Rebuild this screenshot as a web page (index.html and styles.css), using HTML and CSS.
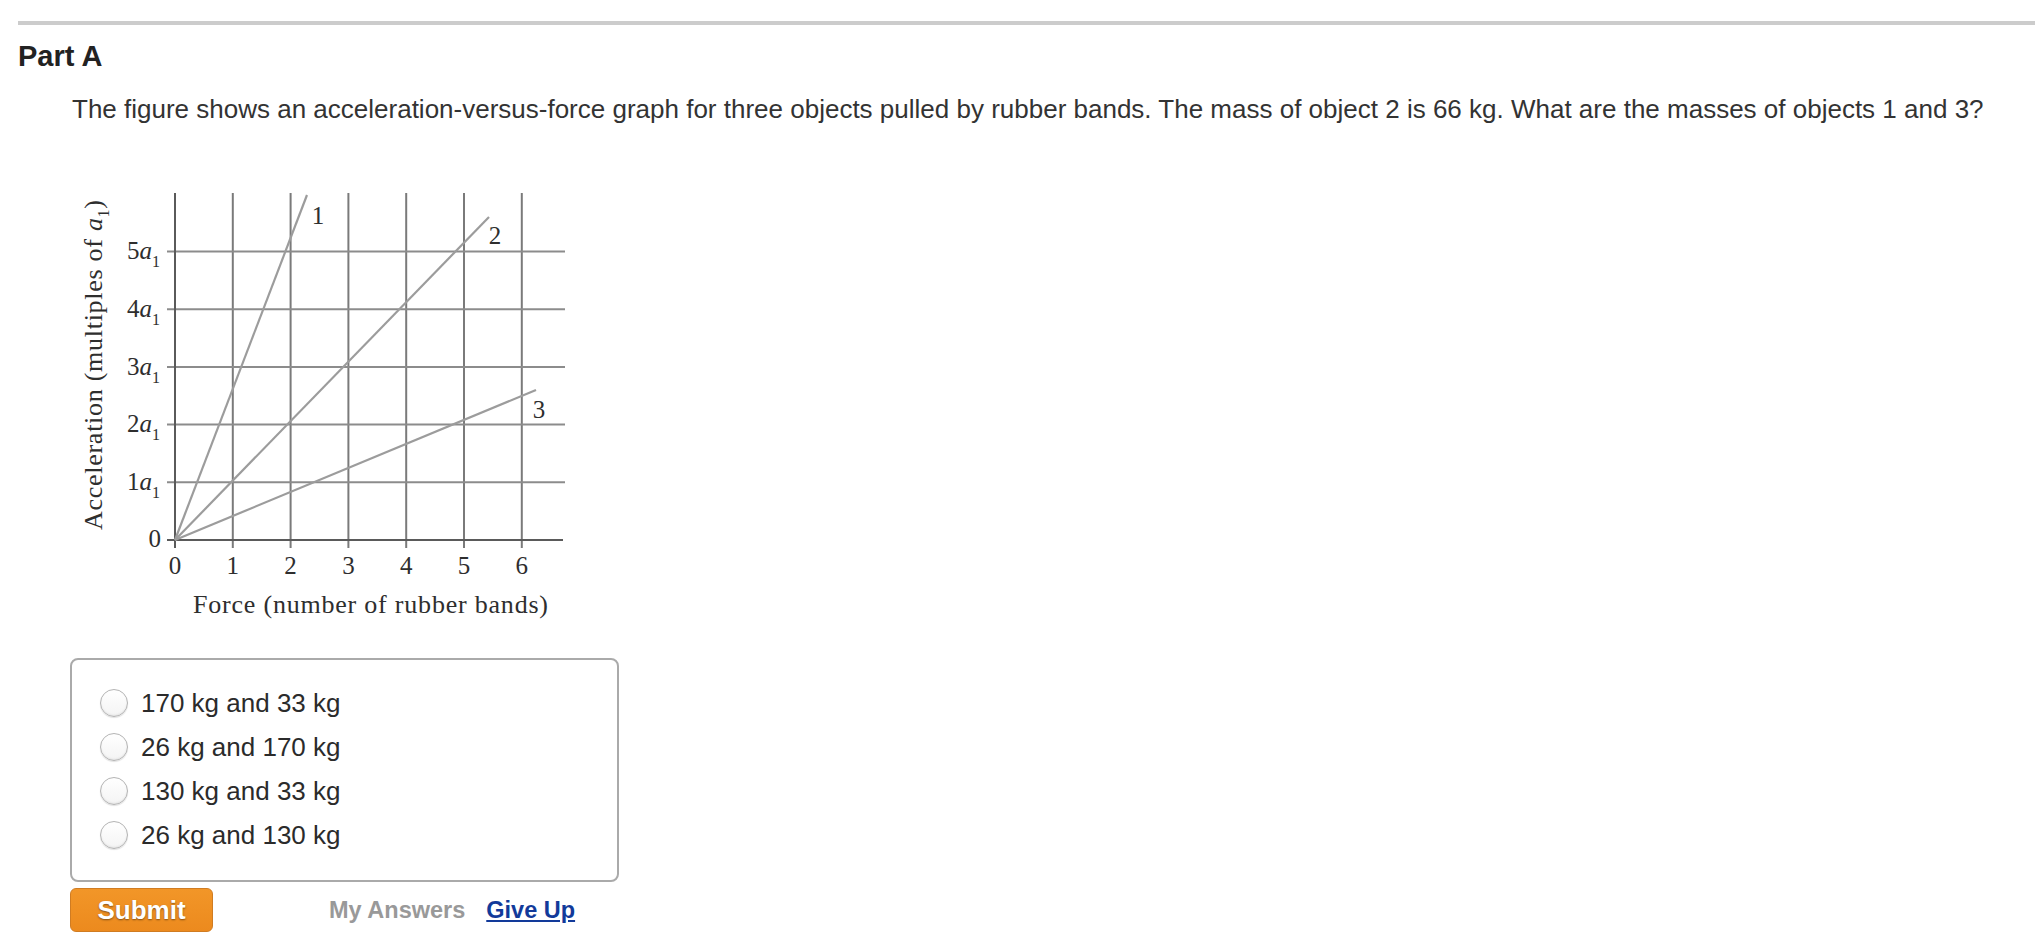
FILE: index.html
```html
<!DOCTYPE html>
<html lang="en">
  <head>
    <meta charset="UTF-8" />
    <title>Part A</title>
    <link rel="stylesheet" href="styles.css">
  </head>
  <body>
    <div class="rule"></div>
    <h2 class="part-title">Part A</h2>

    <p class="question">
      The figure shows an acceleration-versus-force graph for three objects pulled by rubber bands. The mass of object 2 is 66 kg. What are the masses of objects 1 and 3?
    </p>

    <svg class="graph" width="508" height="450" viewBox="72 180 508 450">
      <!-- grid -->
      <g class="grid-v">
        <line x1="232.8" y1="193" x2="232.8" y2="548" />
        <line x1="290.6" y1="193" x2="290.6" y2="548" />
        <line x1="348.4" y1="193" x2="348.4" y2="548" />
        <line x1="406.2" y1="193" x2="406.2" y2="548" />
        <line x1="464" y1="193" x2="464" y2="548" />
        <line x1="521.8" y1="193" x2="521.8" y2="548" />
      </g>
      <g class="grid-h">
        <line x1="167" y1="482.3" x2="565" y2="482.3" />
        <line x1="167" y1="424.6" x2="565" y2="424.6" />
        <line x1="167" y1="366.9" x2="565" y2="366.9" />
        <line x1="167" y1="309.2" x2="565" y2="309.2" />
        <line x1="167" y1="251.5" x2="565" y2="251.5" />
      </g>
      <g class="axis">
        <line x1="175" y1="193" x2="175" y2="548" />
        <line x1="167" y1="540" x2="563" y2="540" />
      </g>

      <!-- data -->
      <g class="data">
        <line x1="175" y1="540" x2="307" y2="195" />
        <line x1="175" y1="540" x2="489" y2="217" />
        <line x1="175" y1="540" x2="536" y2="390" />
      </g>
      <g class="graph-text">
        <text x="318" y="224" text-anchor="middle">1</text>
        <text x="495" y="244" text-anchor="middle">2</text>
        <text x="539" y="418" text-anchor="middle">3</text>

        <text x="161" y="547" text-anchor="end">0</text>
        <text x="160" y="490" text-anchor="end">1<tspan class="var">a</tspan><tspan class="sub" dy="8">1</tspan></text>
        <text x="160" y="432" text-anchor="end">2<tspan class="var">a</tspan><tspan class="sub" dy="8">1</tspan></text>
        <text x="160" y="375" text-anchor="end">3<tspan class="var">a</tspan><tspan class="sub" dy="8">1</tspan></text>
        <text x="160" y="317" text-anchor="end">4<tspan class="var">a</tspan><tspan class="sub" dy="8">1</tspan></text>
        <text x="160" y="259" text-anchor="end">5<tspan class="var">a</tspan><tspan class="sub" dy="8">1</tspan></text>

        <text x="175" y="574" text-anchor="middle">0</text>
        <text x="232.8" y="574" text-anchor="middle">1</text>
        <text x="290.6" y="574" text-anchor="middle">2</text>
        <text x="348.4" y="574" text-anchor="middle">3</text>
        <text x="406.2" y="574" text-anchor="middle">4</text>
        <text x="464" y="574" text-anchor="middle">5</text>
        <text x="521.8" y="574" text-anchor="middle">6</text>

        <text class="axis-title" x="193" y="613" textLength="355" lengthAdjust="spacing">Force (number of rubber bands)</text>
        <text class="axis-title" transform="translate(102 530) rotate(-90)" textLength="330" lengthAdjust="spacing">Acceleration (multiples of <tspan class="var">a</tspan><tspan class="sub" dy="7">1</tspan><tspan dy="-7">)</tspan></text>
      </g>
    </svg>

    <div class="answers">
      <label class="option"><span class="radio"></span>170 kg and 33 kg</label>
      <label class="option"><span class="radio"></span>26 kg and 170 kg</label>
      <label class="option"><span class="radio"></span>130 kg and 33 kg</label>
      <label class="option"><span class="radio"></span>26 kg and 130 kg</label>
    </div>

    <div class="actions">
      <button class="submit">Submit</button>
      <span class="my-answers">My Answers</span>
      <a class="give-up" href="#">Give Up</a>
    </div>
  </body>
</html>
```

FILE: styles.css
```css
body {
  margin: 0;
  font-family: "Liberation Sans", Arial, sans-serif;
  color: #333;
  background-color: white;
}
.rule {
  height: 4px;
  margin: 21px 0 0 18px;
  background-color: #cccccc;
}
.part-title {
  margin: 15px 0 0 18px;
  font-size: 29px;
  line-height: 32px;
  font-weight: bold;
  color: #222;
}
.question {
  margin: 22px 0 0 72px;
  font-size: 26px;
  line-height: 30px;
}
.graph {
  display: block;
  margin: 56px 0 0 72px;
}
.grid-v line {
  stroke: #7a7a7a;
  stroke-width: 2;
}
.grid-h line {
  stroke: #8c8c8c;
  stroke-width: 2;
}
.axis line {
  stroke: #5a5a5a;
  stroke-width: 2;
}
.data line {
  stroke: #9c9c9c;
  stroke-width: 2.2;
}
.graph-text text {
  font-family: "Liberation Serif", "Times New Roman", serif;
  font-size: 25px;
  fill: #2e2e2e;
}
.graph-text .axis-title {
  font-size: 26px;
}
.graph-text .var {
  font-style: italic;
}
.graph-text .sub {
  font-size: 16px;
}
.answers {
  box-sizing: border-box;
  width: 549px;
  height: 224px;
  margin: 28px 0 0 70px;
  padding: 21px 0 0 28px;
  border: 2px solid #aaaaaa;
  border-radius: 8px;
}
.option {
  display: flex;
  align-items: center;
  height: 44px;
  font-size: 26px;
  color: #2b2b2b;
}
.radio {
  box-sizing: border-box;
  width: 28px;
  height: 28px;
  margin-right: 13px;
  border: 1px solid #b4b4b4;
  border-radius: 50%;
  background: linear-gradient(#ffffff, #f4f4f4);
  box-shadow: inset 0 -1px 2px rgba(0, 0, 0, 0.08), 0 1px 1px rgba(0, 0, 0, 0.12);
}
.actions {
  display: flex;
  align-items: center;
  margin: 6px 0 0 70px;
}
.submit {
  box-sizing: border-box;
  width: 143px;
  height: 44px;
  padding: 0;
  border: 1px solid #d07c22;
  border-radius: 6px;
  background: linear-gradient(#f29628, #ec8a1e);
  color: white;
  font-family: "Liberation Sans", Arial, sans-serif;
  font-size: 26px;
  font-weight: bold;
  text-shadow: 0 1px 2px rgba(0, 0, 0, 0.45);
  cursor: pointer;
}
.my-answers {
  margin-left: 116px;
  font-size: 23.5px;
  font-weight: bold;
  color: #999999;
}
.give-up {
  margin-left: 21px;
  font-size: 23.5px;
  font-weight: bold;
  color: #123a9a;
  text-decoration: underline;
}
```
